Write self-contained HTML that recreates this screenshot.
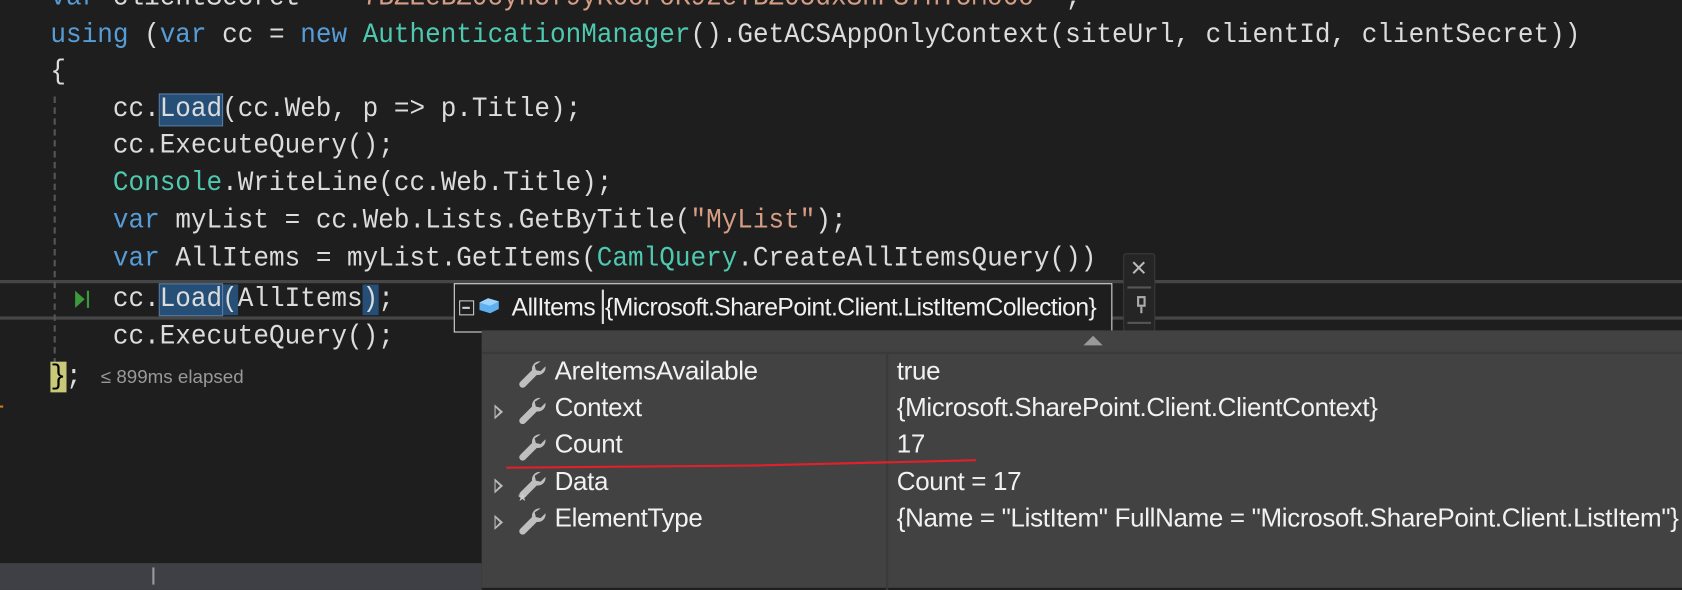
<!DOCTYPE html>
<html><head><style>
*{margin:0;padding:0;box-sizing:border-box}
body{width:1682px;height:541px;background:#1e1e1e;overflow:hidden;position:relative;font-family:"Liberation Mono",monospace}
#c{position:absolute;left:0;top:0;width:1568px;height:545px;transform:scale(1.0727);transform-origin:0 0}
.l{position:absolute;left:47px;font-size:24.25px;color:#dcdcdc;white-space:pre;line-height:30px;transform:scaleY(1.06)}
.k{color:#569cd6}.t{color:#4ec9b0}.s{color:#d69d85}
.hl{background:#264f78;outline:1px solid #5a7fa8}
.hb{background:#264f78}
.ui{font-family:"Liberation Sans",sans-serif}
.row{position:absolute;left:449px;width:1233px;height:34px;font-family:"Liberation Sans",sans-serif;font-size:24.2px;color:#f1f1f1}
.row .n{position:absolute;left:68px;top:1px;letter-spacing:-0.3px}
.row .v{position:absolute;left:387px;top:1px;white-space:nowrap;letter-spacing:-0.3px}
.row .a{position:absolute;left:12px;top:11px;width:0;height:0;border-left:8px solid #bbb;border-top:7px solid transparent;border-bottom:7px solid transparent}
.row .a:after{content:"";position:absolute;left:-7px;top:-4px;border-left:4px solid #424242;border-top:4px solid transparent;border-bottom:4px solid transparent}
.row svg{position:absolute;left:33px;top:3px}
</style></head><body><div id="c">
<div style="position:absolute;left:0;top:261px;width:1568px;height:3px;background:#464646"></div>
<div style="position:absolute;left:0;top:295px;width:1568px;height:3px;background:#464646"></div>
<div style="position:absolute;left:50px;top:90px;height:270px;border-left:2px dashed #555"></div>
<div class="l" style="top:-16px"><span class="k">var</span> clientSecret = <span class="s">"7BZEeBZ0cyh5f9yK6oPoK92eTBZ05dxSnPS7nT5Mo6o="</span>;</div>
<div class="l" style="top:19px"><span class="k">using</span> (<span class="k">var</span> cc = <span class="k">new</span> <span class="t">AuthenticationManager</span>().GetACSAppOnlyContext(siteUrl, clientId, clientSecret))</div>
<div class="l" style="top:53px">{</div>
<div class="l" style="top:88px">    cc.<span class="hl">Load</span>(cc.Web, p =&gt; p.Title);</div>
<div class="l" style="top:122px">    cc.ExecuteQuery();</div>
<div class="l" style="top:157px">    <span class="t">Console</span>.WriteLine(cc.Web.Title);</div>
<div class="l" style="top:192px">    <span class="k">var</span> myList = cc.Web.Lists.GetByTitle(<span class="s">"MyList"</span>);</div>
<div class="l" style="top:227px">    <span class="k">var</span> AllItems = myList.GetItems(<span class="t">CamlQuery</span>.CreateAllItemsQuery())</div>
<div class="l" style="top:265px">    cc.<span class="hl">Load</span><span class="hb">(</span>AllItems<span class="hb">)</span>;</div>
<div class="l" style="top:300px">    cc.ExecuteQuery();</div>
<div class="l" style="top:337px"><span style="background:#c8c878;color:#000">}</span>;</div>
<div class="ui" style="position:absolute;left:94px;top:341px;font-size:17.5px;color:#999">≤ 899ms elapsed</div>
<svg style="position:absolute;left:66px;top:269px" width="20" height="20"><polygon points="4,2 13,10 4,18" fill="#3c9a3c"/><rect x="15" y="2" width="2" height="16" fill="#3c9a3c"/></svg>
<div style="position:absolute;left:423px;top:264px;width:614px;height:46px;border:1.5px solid #ddd;background:#1e1e1e"></div>
<div style="position:absolute;left:428px;top:280px;width:14px;height:14px;border:1.5px solid #ccc"><div style="position:absolute;left:2px;top:5px;width:7px;height:1.5px;background:#ccc"></div></div>
<svg style="position:absolute;left:445px;top:276px" width="22" height="18"><polygon points="2,6 10,2 20,5 20,12 12,16 2,13" fill="#5eb0f0"/><polygon points="2,6 10,2 20,5 12,9" fill="#9fd4ff"/></svg>
<div class="ui" style="position:absolute;left:477px;top:273px;font-size:23px;color:#f1f1f1;letter-spacing:-0.5px">AllItems</div>
<div style="position:absolute;left:561px;top:270px;width:2px;height:32px;background:#ddd"></div>
<div class="ui" style="position:absolute;left:564px;top:273px;font-size:23px;color:#f1f1f1;letter-spacing:-0.5px;white-space:nowrap">{Microsoft.SharePoint.Client.ListItemCollection}</div>
<div style="position:absolute;left:1047px;top:236px;width:30px;height:80px;background:#252526;border:1px solid #3a3a3a;border-radius:3px"></div>
<div style="position:absolute;left:1054px;top:234px;font-family:'Liberation Sans';font-size:26px;color:#bbb">×</div>
<div style="position:absolute;left:1051px;top:267px;width:22px;height:2px;background:#555"></div>
<div style="position:absolute;left:1051px;top:300px;width:22px;height:2px;background:#555"></div>
<div style="position:absolute;left:1060px;top:276px;width:8px;height:10px;border:2px solid #aaa"></div>
<div style="position:absolute;left:1063px;top:286px;width:2px;height:6px;background:#aaa"></div>
<div style="position:absolute;left:449px;top:308px;width:1233px;height:240px;background:#424242"></div>
<div style="position:absolute;left:449px;top:328px;width:1233px;height:2px;background:#3a3a3a"></div>
<div style="position:absolute;left:1010px;top:313px;border-left:9px solid transparent;border-right:9px solid transparent;border-bottom:9px solid #999"></div>
<div style="position:absolute;left:826px;top:330px;width:2px;height:220px;background:#3a3a3a"></div>
<svg width="0" height="0" style="position:absolute"><defs><path id="w" d="M22 2 a7 7 0 0 0 -8 8 L3 21 a3 3 0 0 0 4.5 4.5 L18.5 14.5 a7 7 0 0 0 8 -8 l-4.5 4.5 -4.5 -1 -1 -4.5z" fill="#bfbfbf"/></defs></svg>
<div class="row" style="top:332px"><svg width="30" height="30"><use href="#w"/></svg><span class="n">AreItemsAvailable</span><span class="v">true</span></div>
<div class="row" style="top:366px"><span class="a"></span><svg width="30" height="30"><use href="#w"/></svg><span class="n">Context</span><span class="v">{Microsoft.SharePoint.Client.ClientContext}</span></div>
<div class="row" style="top:400px"><svg width="30" height="30"><use href="#w"/></svg><span class="n">Count</span><span class="v">17</span></div>
<div class="row" style="top:435px"><span class="a"></span><svg width="30" height="30"><use href="#w"/><text x="0" y="29" font-size="11" fill="#ccc">★</text></svg><span class="n">Data</span><span class="v">Count = 17</span></div>
<div class="row" style="top:469px"><span class="a"></span><svg width="30" height="30"><use href="#w"/></svg><span class="n">ElementType</span><span class="v">{Name = "ListItem" FullName = "Microsoft.SharePoint.Client.ListItem"}</span></div>
<svg style="position:absolute;left:470px;top:425px" width="450" height="15"><path d="M2 11 L230 9 L440 4" stroke="#e0202a" stroke-width="2" fill="none"/></svg>
<div style="position:absolute;left:0;top:525px;width:449px;height:25px;background:#3f3f46"></div>
<div style="position:absolute;left:142px;top:529px;width:2px;height:16px;background:#999"></div>
<div style="position:absolute;left:0;top:378px;width:3px;height:2px;background:#c77a1e"></div>
</div></body></html>
